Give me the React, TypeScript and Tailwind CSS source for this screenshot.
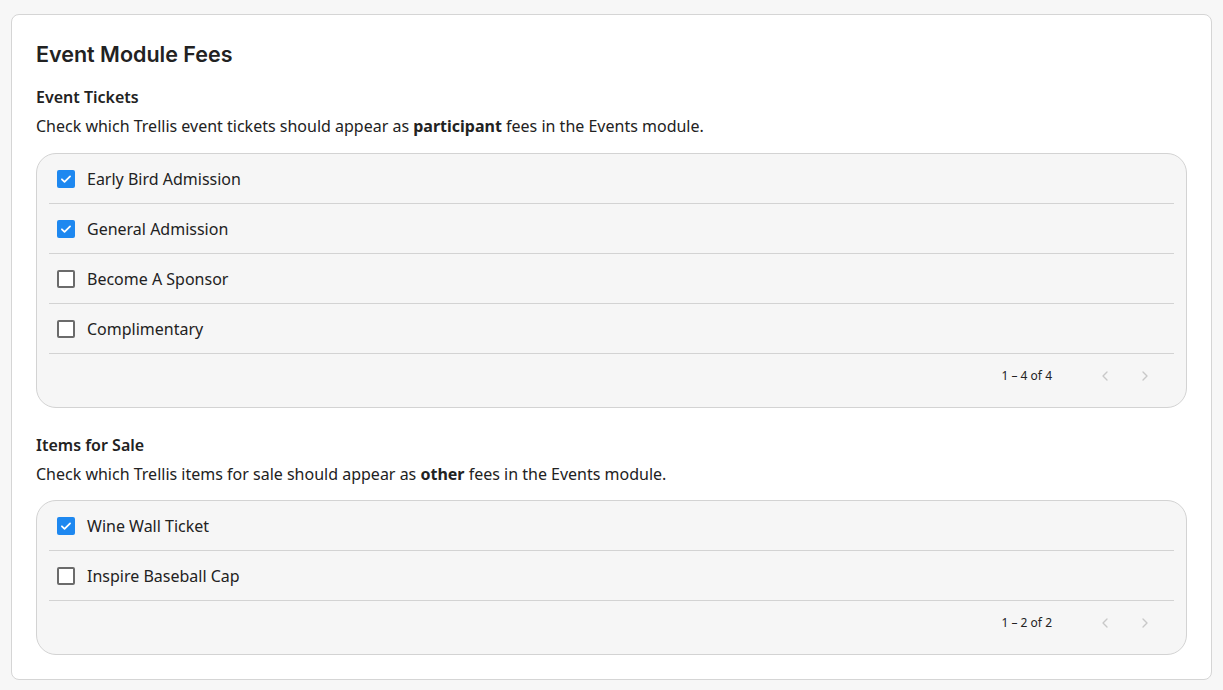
import React from 'react';

const body = { fontFamily: '"Noto Sans", "Open Sans", sans-serif' };

interface Item {
  label: string;
  checked: boolean;
}

function Checkbox({ checked }: { checked: boolean }) {
  if (checked) {
    return (
      <span className="flex h-[18px] w-[18px] items-center justify-center rounded-[2px] bg-[#1e88f0]">
        <svg width="14" height="14" viewBox="0 0 24 24" fill="none" stroke="white" strokeWidth="3" strokeLinecap="round" strokeLinejoin="round">
          <path d="M5 12.5l4.5 4.5L19 7.5" />
        </svg>
      </span>
    );
  }
  return <span className="h-[18px] w-[18px] rounded-[2px] border-2 border-[#6b6b6b] bg-white" />;
}

function FeeList({ items }: { items: Item[] }) {
  return (
    <div className="rounded-[20px] border border-[#d3d3d3] bg-[#f6f6f6] px-3">
      {items.map((item) => (
        <div key={item.label} className="flex h-[50px] items-center gap-3 border-b border-[#d3d3d3] pl-[8px]">
          <Checkbox checked={item.checked} />
          <span className="text-[16px] text-[#222]">{item.label}</span>
        </div>
      ))}
      <div className="flex h-[53px] items-start justify-end pt-[14px] pr-[21px] text-[12px] leading-[16px] text-[#222]">
        <span className="mr-[45px]">
          1 – {items.length} of {items.length}
        </span>
        <svg width="16" height="16" viewBox="0 0 24 24" fill="none" stroke="#c8c8c8" strokeWidth="2" strokeLinecap="round" strokeLinejoin="round" className="mr-[24px]">
          <path d="M15 6l-6 6 6 6" />
        </svg>
        <svg width="16" height="16" viewBox="0 0 24 24" fill="none" stroke="#c8c8c8" strokeWidth="2" strokeLinecap="round" strokeLinejoin="round">
          <path d="M9 6l6 6-6 6" />
        </svg>
      </div>
    </div>
  );
}

export default function App() {
  const tickets: Item[] = [
    { label: 'Early Bird Admission', checked: true },
    { label: 'General Admission', checked: true },
    { label: 'Become A Sponsor', checked: false },
    { label: 'Complimentary', checked: false },
  ];
  const items: Item[] = [
    { label: 'Wine Wall Ticket', checked: true },
    { label: 'Inspire Baseball Cap', checked: false },
  ];

  return (
    <div className="min-h-[690px] bg-[#f7f7f7] px-[11px] pt-[14px] pb-[10px]" style={body}>
      <div className="rounded-[8px] border border-[#d5d5d5] bg-white px-6 pt-[25px] pb-[24px]">
        <h1 className="text-[21.5px] leading-[28px] font-semibold text-[#222]" style={{ fontFamily: 'Inter, sans-serif' }}>
          Event Module Fees
        </h1>

        <h2 className="mt-[18px] text-[16px] leading-[22px] font-semibold text-[#222]">Event Tickets</h2>
        <p className="mt-[7px] text-[16px] leading-[22px] text-[#222]">
          Check which Trellis event tickets should appear as <b className="font-bold">participant</b> fees in the Events module.
        </p>
        <div className="mt-[16px]">
          <FeeList items={tickets} />
        </div>

        <h2 className="mt-[26px] text-[16px] leading-[22px] font-semibold text-[#222]">Items for Sale</h2>
        <p className="mt-[7px] text-[16px] leading-[22px] text-[#222]">
          Check which Trellis items for sale should appear as <b className="font-bold">other</b> fees in the Events module.
        </p>
        <div className="mt-[15px]">
          <FeeList items={items} />
        </div>
      </div>
    </div>
  );
}
